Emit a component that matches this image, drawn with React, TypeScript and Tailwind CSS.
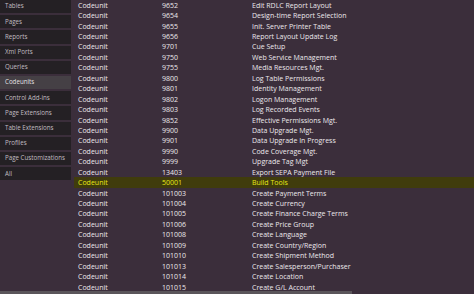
const categories = [
  'Tables',
  'Pages',
  'Reports',
  'Xml Ports',
  'Queries',
  'Codeunits',
  'Control Add-ins',
  'Page Extensions',
  'Table Extensions',
  'Profiles',
  'Page Customizations',
  'All',
];

const rows: [string, string][] = [
  ['9652', 'Edit RDLC Report Layout'],
  ['9654', 'Design-time Report Selection'],
  ['9655', 'Init. Server Printer Table'],
  ['9656', 'Report Layout Update Log'],
  ['9701', 'Cue Setup'],
  ['9750', 'Web Service Management'],
  ['9755', 'Media Resources Mgt.'],
  ['9800', 'Log Table Permissions'],
  ['9801', 'Identity Management'],
  ['9802', 'Logon Management'],
  ['9803', 'Log Recorded Events'],
  ['9852', 'Effective Permissions Mgt.'],
  ['9900', 'Data Upgrade Mgt.'],
  ['9901', 'Data Upgrade In Progress'],
  ['9990', 'Code Coverage Mgt.'],
  ['9999', 'Upgrade Tag Mgt'],
  ['13403', 'Export SEPA Payment File'],
  ['50001', 'Build Tools'],
  ['101003', 'Create Payment Terms'],
  ['101004', 'Create Currency'],
  ['101005', 'Create Finance Charge Terms'],
  ['101006', 'Create Price Group'],
  ['101008', 'Create Language'],
  ['101009', 'Create Country/Region'],
  ['101010', 'Create Shipment Method'],
  ['101013', 'Create Salesperson/Purchaser'],
  ['101014', 'Create Location'],
  ['101015', 'Create G/L Account'],
];

export default function App() {
  return (
    <div
      className="relative w-[474px] h-[294px] overflow-hidden bg-[#3b2e3b] flex text-[7px] leading-none text-[#ece8ec] whitespace-nowrap"
      style={{ fontFamily: '"Open Sans", "Noto Sans", sans-serif' }}
    >
      {/* object type list */}
      <div className="w-[71px] shrink-0 flex flex-col gap-[2px] text-[6.2px]">
        {categories.map((c) => (
          <div
            key={c}
            className={`h-[13.2px] flex items-center pl-[5px] ${
              c === 'Codeunits' ? 'bg-[#454045] text-[#e4e0e4]' : 'bg-[#242024] text-[#c2bec2]'
            }`}
          >
            {c}
          </div>
        ))}
      </div>

      {/* objects table */}
      <div className="flex-1 flex flex-col pl-[3px]">
        {rows.map(([id, name]) => {
          const selected = id === '50001';
          return (
            <div
              key={id}
              className={`h-[10.44px] shrink-0 flex items-center ${
                selected ? 'bg-[#403c0c] text-[#e8e814]' : ''
              }`}
            >
              <span className="w-[88px] shrink-0 pl-[4px]">Codeunit</span>
              <span className="w-[90px] shrink-0">{id}</span>
              <span>{name}</span>
            </div>
          );
        })}
      </div>

      {/* horizontal scrollbar */}
      <div className="absolute left-0 bottom-0 w-[352px] h-[3px] bg-[#5a555a]" />
    </div>
  );
}
